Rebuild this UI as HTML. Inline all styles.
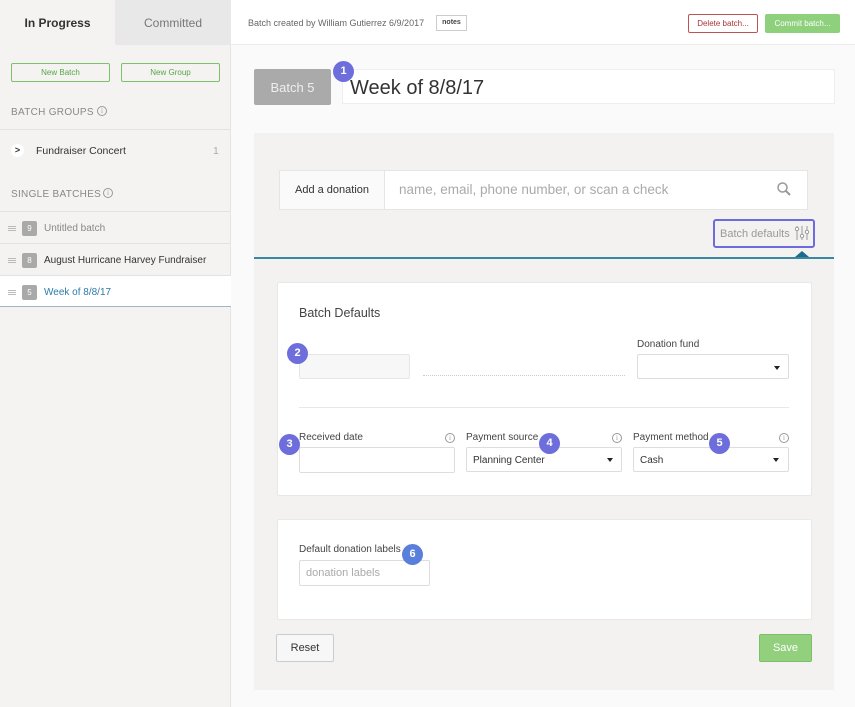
<!DOCTYPE html>
<html><head><meta charset="utf-8"><style>
*{box-sizing:border-box;margin:0;padding:0}
body{width:855px;height:707px;overflow:hidden;background:#fafafa;font-family:"Liberation Sans",sans-serif;color:#333;position:relative}
.a{position:absolute}
.side{left:0;top:0;width:231px;height:707px;background:#f4f3f1;border-right:1px solid #e4e4e4}
.badge{position:absolute;width:21px;height:21px;border-radius:50%;background:#6e6ddc;color:#fff;font-size:11px;font-weight:bold;text-align:center;line-height:21px}
.inp{position:absolute;background:#fff;border:1px solid #ddd;border-radius:2px}
.lbl{position:absolute;font-size:10px;color:#444}
.caret{position:absolute;width:0;height:0;border-left:3.5px solid transparent;border-right:3.5px solid transparent;border-top:4px solid #222}
.info{position:absolute;width:10px;height:10px;border:1px solid #999;border-radius:50%;font-size:7px;color:#999;text-align:center;line-height:8px;font-family:"Liberation Serif",serif}
.row{position:absolute;left:0;width:231px;height:32px;border-top:1px solid #e2e2e2;font-size:10px;line-height:33px}
.num{position:absolute;left:22px;top:9px;width:15px;height:15px;background:#a9a9a9;color:#fff;font-size:8px;text-align:center;line-height:15px;border-radius:2px}
.ham{position:absolute;left:8px;top:14px;width:8px;height:5px;border-top:1px solid #bbb;border-bottom:1px solid #bbb}
.ham:after{content:"";position:absolute;left:0;top:1px;width:8px;border-top:1px solid #bbb}
</style></head><body>
<div class="a side"></div>
<div class="a" style="left:0;top:0;width:115px;height:45px;text-align:center;line-height:47px;font-size:12px;font-weight:bold;color:#333">In Progress</div>
<div class="a" style="left:115px;top:0;width:116px;height:45px;background:#e8e8e8;text-align:center;line-height:47px;font-size:12px;color:#777">Committed</div>
<div class="a" style="left:11px;top:63px;width:99px;height:19px;border:1px solid #7cc16b;border-radius:2px;font-size:8px;color:#55a845;text-align:center;line-height:17px">New Batch</div>
<div class="a" style="left:121px;top:63px;width:99px;height:19px;border:1px solid #7cc16b;border-radius:2px;font-size:8px;color:#55a845;text-align:center;line-height:17px">New Group</div>
<div class="a" style="left:11px;top:107px;font-size:10px;color:#888;letter-spacing:.3px">BATCH GROUPS</div>
<div class="info" style="left:97px;top:106px">i</div>
<div class="row" style="top:129px;height:40px;line-height:42px;font-size:10.5px"><span class="a" style="left:11px;top:14px;width:13px;height:13px;background:#fff;border-radius:50%;font-size:9px;line-height:13px;text-align:center;font-weight:bold">&gt;</span><span class="a" style="left:36px">Fundraiser Concert</span><span class="a" style="left:213px;color:#aaa">1</span></div>
<div class="a" style="left:11px;top:189px;font-size:10px;color:#888;letter-spacing:.3px">SINGLE BATCHES</div>
<div class="info" style="left:103px;top:188px">i</div>
<div class="row" style="top:211px;color:#888"><span class="ham"></span><span class="num">9</span><span class="a" style="left:44px">Untitled batch</span></div>
<div class="row" style="top:243px"><span class="ham"></span><span class="num">8</span><span class="a" style="left:44px">August Hurricane Harvey Fundraiser</span></div>
<div class="row" style="top:275px;background:#fff;border-bottom:1px solid #9bb7c4;color:#2b7bab"><span class="ham"></span><span class="num">5</span><span class="a" style="left:44px">Week of 8/8/17</span></div>

<div class="a" style="left:231px;top:0;width:624px;height:45px;background:#fff;border-bottom:1px solid #ececec"></div>
<div class="a" style="left:248px;top:18px;font-size:9px;color:#666">Batch created by William Gutierrez 6/9/2017</div>
<div class="a" style="left:436px;top:15px;width:31px;height:16px;border:1px solid #ccc;font-size:7px;font-weight:bold;text-align:center;line-height:14px;color:#444">notes</div>
<div class="a" style="left:688px;top:14px;width:70px;height:19px;border:1px solid #b55;border-radius:2px;font-size:8px;color:#a33;text-align:center;line-height:17px">Delete batch...</div>
<div class="a" style="left:765px;top:14px;width:75px;height:19px;background:#8ed07c;border-radius:2px;font-size:8px;color:#fff;text-align:center;line-height:19px">Commit batch...</div>

<div class="a" style="left:254px;top:69px;width:77px;height:36px;background:#aaa;border-radius:2px;color:#eee;font-size:13px;text-align:center;line-height:37px">Batch 5</div>
<div class="a" style="left:342px;top:69px;width:493px;height:35px;background:#fff;border:1px solid #eee;font-size:20px;line-height:37px;padding-left:7px;color:#333">Week of 8/8/17</div>
<div class="badge" style="left:333px;top:61px">1</div>

<div class="a" style="left:254px;top:133px;width:580px;height:557px;background:#f3f2f0"></div>
<div class="a" style="left:279px;top:170px;width:529px;height:40px;background:#fff;border:1px solid #e5e5e5"></div>
<div class="a" style="left:279px;top:170px;width:106px;height:40px;background:#fafafa;border:1px solid #e5e5e5;font-size:11px;text-align:center;line-height:39px">Add a donation</div>
<div class="a" style="left:399px;top:182px;font-size:13.5px;color:#aaa">name, email, phone number, or scan a check</div>
<svg class="a" style="left:776px;top:181px" width="16" height="16"><circle cx="6.5" cy="6.5" r="4.5" fill="none" stroke="#999" stroke-width="1.5"/><path d="M10 10L14 14" stroke="#999" stroke-width="2"/></svg>
<div class="a" style="left:713px;top:219px;width:102px;height:29px;border:2px solid #6c6cdc;border-radius:3px;font-size:11px;color:#999;line-height:27px;padding-left:5px">Batch defaults</div>
<svg class="a" style="left:795px;top:225px" width="14" height="16"><path d="M2 1V15M7 1V15M12 1V15" stroke="#999" stroke-width="1"/><circle cx="2" cy="4" r="1.7" fill="#fff" stroke="#999"/><circle cx="7" cy="11" r="1.7" fill="#fff" stroke="#999"/><circle cx="12" cy="7" r="1.7" fill="#fff" stroke="#999"/></svg>
<div class="a" style="left:254px;top:257px;width:580px;height:2px;background:#3b87a3"></div>
<div class="a" style="left:795px;top:251px;width:0;height:0;border-left:7px solid transparent;border-right:7px solid transparent;border-bottom:6px solid #1f6a8a"></div>

<div class="a" style="left:277px;top:282px;width:535px;height:214px;background:#fff;border:1px solid #e8e8e8;border-radius:2px"></div>
<div class="a" style="left:299px;top:306px;font-size:12.5px;color:#444">Batch Defaults</div>
<div class="a" style="left:299px;top:354px;width:111px;height:25px;background:#f7f7f7;border:1px solid #e6e6e6;border-radius:2px"></div>
<div class="a" style="left:423px;top:375px;width:202px;border-top:1px dotted #ccc"></div>
<div class="badge" style="left:287px;top:343px">2</div>
<div class="lbl" style="left:637px;top:339px">Donation fund</div>
<div class="inp" style="left:637px;top:354px;width:152px;height:25px"></div><div class="caret" style="left:774px;top:366px"></div>
<div class="a" style="left:299px;top:407px;width:490px;border-top:1px solid #e8e8e8"></div>
<div class="lbl" style="left:299px;top:432px">Received date</div><div class="info" style="left:445px;top:433px">i</div>
<div class="inp" style="left:299px;top:447px;width:156px;height:26px"></div>
<div class="badge" style="left:279px;top:434px">3</div>
<div class="lbl" style="left:466px;top:432px">Payment source</div><div class="info" style="left:612px;top:433px">i</div>
<div class="inp" style="left:466px;top:447px;width:156px;height:25px;font-size:10px;line-height:25px;padding-left:6px">Planning Center</div><div class="caret" style="left:607px;top:458px"></div>
<div class="badge" style="left:539px;top:433px">4</div>
<div class="lbl" style="left:633px;top:432px">Payment method</div><div class="info" style="left:779px;top:433px">i</div>
<div class="inp" style="left:633px;top:447px;width:156px;height:25px;font-size:10px;line-height:25px;padding-left:6px">Cash</div><div class="caret" style="left:773px;top:458px"></div>
<div class="badge" style="left:709px;top:433px">5</div>

<div class="a" style="left:277px;top:519px;width:535px;height:101px;background:#fff;border:1px solid #e8e8e8;border-radius:2px"></div>
<div class="lbl" style="left:299px;top:544px">Default donation labels</div>
<div class="inp" style="left:299px;top:560px;width:131px;height:26px;font-size:11px;color:#aaa;line-height:25px;padding-left:6px">donation labels</div>
<div class="badge" style="left:402px;top:544px;background:#5a7fdb">6</div>

<div class="a" style="left:276px;top:634px;width:58px;height:28px;background:#f7f7f7;border:1px solid #ccc;border-radius:2px;font-size:11px;text-align:center;line-height:27px;color:#333">Reset</div>
<div class="a" style="left:759px;top:634px;width:53px;height:28px;background:#92d07e;border:1px solid #7cbf69;border-radius:2px;font-size:11px;text-align:center;line-height:27px;color:#fff">Save</div>
</body></html>
